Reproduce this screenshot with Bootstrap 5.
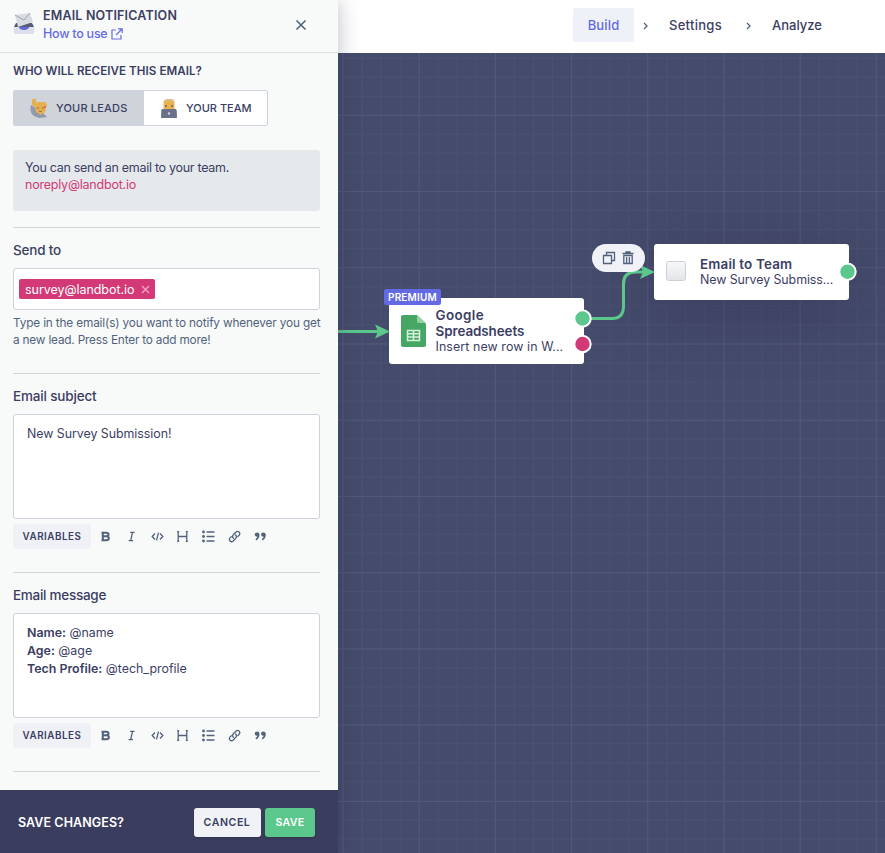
<!DOCTYPE html>
<html lang="en">
<head>
<meta charset="utf-8">
<meta name="viewport" content="width=device-width, initial-scale=1">
<title>Email notification</title>
<link href="https://cdn.jsdelivr.net/npm/bootstrap@5.3.0/dist/css/bootstrap.min.css" rel="stylesheet">
<style>
:root{--ink:#3b3e63;--slate:#51627c;--green:#5cc78c;--pink:#d33976;--violet:#646ae4}
body{font-family:"Inter","Liberation Sans",sans-serif;color:var(--ink);width:885px;height:853px;overflow:hidden;font-size:12.5px;line-height:17px;background:#454b6b}
svg{display:block;flex:none}
.side{width:338px;height:853px;background:#f8faf9;box-shadow:0 0 20px rgba(40,42,70,.3);z-index:5}
.side-head{height:53px;border-bottom:1px solid #dcdfe5;padding:6px 13px 0}
.side-body{height:737px;padding:0 18px 0 13px}
.side-foot{height:63px;background:#3b3d5e;padding:2px 23px 0 18px}
.title{font-size:12.5px;font-weight:600;line-height:18px;padding-top:1px}
.howto{color:var(--violet);font-size:12.5px;font-weight:500;line-height:18px}
.who{font-size:11.6px;font-weight:600;padding-top:10px;height:37px}
.toggle{width:255px;height:36px;border:1px solid #d0d3dc;border-radius:2px;background:#fff;font-size:11px;font-weight:500}
.toggle .half{padding-left:16px;gap:8px}
.toggle .on{width:130px;background:#cfd3da}
.note{margin-top:24px;height:61px;background:#e6e9ec;border-radius:3px;padding:9px 12px}
.pink{color:var(--pink)}
.rule{height:1px;background:#d2d4d9}
.lab{font-size:13.5px;font-weight:500;height:40px;padding-top:14px}
.field{border:1px solid #d0d1da;border-radius:3px;background:#fff}
.chip{height:20px;width:136px;background:var(--pink);border-radius:2px;color:#fff;padding:0 5px 0 6px;font-size:12.5px}
.help{color:var(--slate);font-size:11.8px;height:63px;padding-top:5px;white-space:nowrap}
.area{height:105px;padding:10px 13px;line-height:18px;font-size:12.4px}
.tools{margin-top:5px;height:24px;color:var(--slate)}
.vars{width:78px;height:25px;background:#eff1f6;border-radius:3px;font-size:9.8px;font-weight:600;color:var(--ink);margin-right:8px}
.ico{width:25.8px;color:var(--slate)}
.fbtn{height:29px;border-radius:3px;font-size:10.6px;font-weight:600;padding:0;border:0;line-height:29px;box-shadow:0 1px 2px rgba(0,0,0,.2)}
.b-cancel,.b-cancel:hover{width:67px;background:#f0f2f6;color:var(--ink)}
.b-save,.b-save:hover{width:50px;background:var(--green);color:#fff;margin-left:4.5px}
.main-top{height:53px;background:#fff;padding:8px 0 0 235px;font-size:13px;font-weight:500}
.step-on{width:61px;height:34px;background:#eff1f8;border-radius:2px;color:var(--violet)}
.canvas{height:800px;position:relative;background-color:#454b6b;
background-image:linear-gradient(90deg,#525878 1.3px,transparent 1.3px),linear-gradient(#525878 1.3px,transparent 1.3px),linear-gradient(90deg,#4b5171 1px,transparent 1px),linear-gradient(#4b5171 1px,transparent 1px);
background-size:76.2px 76.2px,76.25px 76.25px,19.05px 19.05px,19.06px 19.06px;background-position:80.7px 0,0 61.8px,80.7px 0,0 61.8px}
.node{position:absolute;background:#fff;border-radius:3px;width:195px}
.node-a{left:51px;top:245px;height:66px;padding:9px 0 0 12px}
.node-b{left:316px;top:191px;height:56px;padding:11px 0 0 12px;box-shadow:0 12px 60px rgba(40,43,80,.4)}
.ntitle{font-size:13.4px;font-weight:600;line-height:16px}
.ntext{font-size:12.4px;line-height:16px;white-space:nowrap}
.prem{position:absolute;left:46px;top:236px;width:57px;height:16px;background:var(--violet);color:#fff;font-size:10px;font-weight:600;border-radius:2px}
.wires{position:absolute;left:0;top:0}
.actions{position:absolute;left:254px;top:191px;width:53px;height:28px;background:#f0f2f7;border-radius:15px;gap:6px;padding-right:2px;color:var(--slate)}
.closer{margin:13px 18px 0 0}
.h42{height:42px}.ms-1px{margin-left:1px}.mt-24{margin-top:24px}
.savetext{font-size:12.5px}
.chev{margin-top:14px}.c-one{margin-left:9px}.s-one{margin-left:21px;width:53px}.c-two{margin-left:24px}.s-two{margin-left:21px}
.step{padding-top:9px}
.mt-boxicon{margin-top:6px}.nb-text{margin:1px 0 0 14px}.na-text{margin:1px 0 0 9.5px}.na-title{line-height:15.5px}
/* tracking */
.t1{letter-spacing:.18px}.t2{letter-spacing:-.25px}.t3{letter-spacing:.06px}.t4{letter-spacing:.19px}
.t6{letter-spacing:-.29px}.t7{letter-spacing:-.22px}.t8{letter-spacing:-.19px}.t9{letter-spacing:-.05px}
.t10{letter-spacing:-.155px}.t11{letter-spacing:-.19px}.t12{letter-spacing:-.17px}.t13{letter-spacing:-.04px}
.t14{letter-spacing:.54px}.t15{letter-spacing:-.27px}.t18{letter-spacing:.08px}.t19{letter-spacing:.55px}
.t20{letter-spacing:.35px}.t21{letter-spacing:.15px}.t22{letter-spacing:.28px}.t24{letter-spacing:.18px}
.t25{letter-spacing:-.07px}.t26{letter-spacing:.4px}.t27{letter-spacing:-.06px}.t28{letter-spacing:.1px}.t29{letter-spacing:.2px}
</style>
</head>
<body>
<svg width="0" height="0" class="position-absolute" aria-hidden="true">
<defs>
<g id="g-code" fill="none" stroke="currentColor" stroke-width="1.3"><path d="M4 3.5 1.2 6.5 4 9.5M9 3.5l2.8 3L9 9.5M7.5 2.7 5.5 10.3"/></g>
<g id="g-list"><g fill="currentColor"><circle cx="1.5" cy="2" r="1.4"/><circle cx="1.5" cy="6.500" r="1.4"/><circle cx="1.5" cy="11" r="1.4"/></g><path d="M4.5 2H12.5M4.5 6.5H12.5M4.5 11H12.5" stroke="currentColor" stroke-width="1.4"/></g>
<g id="g-link" fill="none" stroke="currentColor" stroke-width="1.3" stroke-linecap="round"><path d="M5.5 8.4C4.2 7 4.5 5.7 5.4 4.8L7.9 2.2C8.900 1.2 10.200 1.3 11.100 2.1 12 3 12 4.2 11.100 5.2L9.800 6.600"/><path d="M7.600 5C8.800 6.200 8.600 7.500 7.800 8.400L5.200 11C4.200 11.900 2.900 11.800 2.100 11 1.200 10.100 1.200 8.900 2.100 7.900L3.300 6.700"/></g>
<g id="g-quote" fill="currentColor"><path d="M3.1 2.4C1.7 2.4.8 3.3.8 4.6.8 5.9 1.7 6.7 2.8 6.7 3 6.7 3.2 6.7 3.4 6.6 3.2 7.8 2.4 8.6 1.5 9.1L2.2 10.4C4.2 9.500 5.5 7.500 5.5 5.1 5.5 3.3 4.5 2.4 3.1 2.4Z"/><path d="M9.4 2.4C8 2.4 7.1 3.3 7.1 4.6 7.1 5.9 8 6.7 9.1 6.7 9.3 6.7 9.5 6.7 9.7 6.6 9.5 7.8 8.7 8.6 7.8 9.1L8.5 10.4C10.5 9.5 11.8 7.5 11.8 5.1 11.8 3.3 10.8 2.4 9.4 2.4Z"/></g>
<g id="g-bold" fill="none" stroke="currentColor" stroke-width="2"><path d="M3.8 2.7V10.3M2.5 2.7H7.2C10.3 2.7 10.3 6.3 7.2 6.3H4M7.2 6.3C10.8 6.3 10.8 10.3 7.2 10.3H2.5"/></g>
<g id="g-ital" fill="none" stroke="currentColor" stroke-width="1.3"><path d="M5.2 2.4H9.6M3.600 10.700H8M7.500 2.400 5.700 10.700"/></g>
<g id="g-head" fill="none" stroke="currentColor" stroke-width="1.3"><path d="M2.2 1.5V11.5M10.800 1.500V11.500M2.200 6.500H10.800M1.200 1.700H3.200M9.800 1.700H11.800M1.200 11.300H3.200M9.800 11.300H11.800"/></g>
</defs>
</svg>
<div class="d-flex">
<aside class="side position-relative flex-shrink-0 d-flex flex-column">
  <header class="side-head d-flex">
    <svg width="22" height="24" viewBox="0 0 22 24" class="mt-1"><path d="M2 14 1 19V23Q1 24 2 24H20Q21 24 21 23V19L20 14Z" fill="#d5d9e5"/><path d="M3 13H19L21 17Q11 22 1 17Z" fill="#555d7b"/><path d="M2 5 17 3 20 12 5 17Z" fill="#d8dce1"/><path d="M2 5 11 10 17 3" fill="none" stroke="#9da4ae"/><path d="M1 17H6Q7 20 11 20T16 17H21V24H1Z" fill="#dce0ec"/><path d="M6 17Q7 20 11 20T16 17Z" fill="#6369d8"/></svg>
    <div class="flex-grow-1 ms-2">
      <div class="title"><span class="t1">EMAIL NOTIFICATION</span></div>
      <div class="howto d-flex align-items-center"><span class="t2">How to use</span><svg width="12" height="12" viewBox="0 0 12 12" class="ms-1" fill="none" stroke="currentColor" stroke-width="1.2"><path d="M5 2H1V11H10V7M7 .8H11.2V5M11 1 5 7"/></svg></div>
    </div>
    <svg width="12" height="12" viewBox="0 0 12 12" class="closer" fill="none" stroke="#51627c" stroke-width="1.6"><path d="M1.5 1.5 10.5 10.5M10.5 1.5 1.5 10.5"/></svg>
  </header>
  <div class="side-body">
    <div class="who"><span class="t3">WHO WILL RECEIVE THIS EMAIL?</span></div>
    <div class="toggle d-flex">
      <div class="half on d-flex align-items-center">
        <svg width="18" height="20" viewBox="0 0 18 20"><path d="M1 7Q-1 14 4 18L9 20 17 19 12 14Z" fill="#9298ad"/><path d="M2 2Q3 0 6 1L6 5 8 4 15 4 17 6 15 14 11 17 6 14 5 9 2 7Z" fill="#e5b04d"/><path d="M7 10H9M12 10H14M9 13Q11 14 12 13" stroke="#8e6b4d" fill="none"/><path d="M14 8H16V10H14Z" fill="#e36c72"/></svg>
        <span class="t4">YOUR LEADS</span></div>
      <div class="half d-flex align-items-center">
        <svg width="18" height="20" viewBox="0 0 18 20"><path d="M1 12H17V18H1Z" fill="#9b9fb2"/><rect x="3.5" y="1" width="11" height="12" rx="4" fill="#e7b252"/><path d="M5 3Q9 0 13 3" fill="none" stroke="#c8c8c2"/><path d="M6 7V9M12 7V9" stroke="#744d63" stroke-width="1.3"/><path d="M2 11H16L17 20H1Z" fill="#6c718a"/><circle cx="9" cy="15.5" r="1.2" fill="#d0d3dd"/></svg>
        <span class="t5">YOUR TEAM</span></div>
    </div>
    <div class="note"><div><span class="t6">You can send an email to your team.</span></div><div class="pink"><span class="t7">noreply@landbot.io</span></div></div>
    <div class="rule mt-3"></div>
    <div class="lab"><span class="t8">Send to</span></div>
    <div class="field d-flex align-items-center ps-1 h42"><div class="chip d-flex align-items-center justify-content-between ms-1px"><span class="t9">survey@landbot.io</span><svg width="9" height="9" viewBox="0 0 9 9" stroke="#f0a5c4" stroke-width="1.4"><path d="M1 1 8 8M8 1 1 8"/></svg></div></div>
    <div class="help"><span class="t10">Type in the email(s) you want to notify whenever you get</span><br><span class="t11">a new lead. Press Enter to add more!</span></div>
    <div class="rule"></div>
    <div class="lab"><span class="t12">Email subject</span></div>
    <div class="field area"><span class="t13">New Survey Submission!</span></div>
    <div class="tools d-flex align-items-center"><div class="vars d-flex align-items-center justify-content-center"><span class="t14">VARIABLES</span></div>
      <div class="ico"><svg width="13" height="13"><use href="#g-bold"/></svg></div><div class="ico"><svg width="13" height="13"><use href="#g-ital"/></svg></div><div class="ico"><svg width="13" height="13"><use href="#g-code"/></svg></div><div class="ico"><svg width="13" height="13"><use href="#g-head"/></svg></div><div class="ico"><svg width="13" height="13"><use href="#g-list"/></svg></div><div class="ico"><svg width="13" height="13"><use href="#g-link"/></svg></div><div class="ico"><svg width="13" height="13"><use href="#g-quote"/></svg></div>
    </div>
    <div class="rule mt-24"></div>
    <div class="lab"><span class="t15">Email message</span></div>
    <div class="field area"><div><b class="fw-semibold t16">Name:</b> <span class="t17">@name</span></div><div><b class="fw-semibold t16">Age:</b> <span class="t17">@age</span></div><div><b class="fw-semibold t16">Tech Profile:</b> <span class="t17">@tech_profile</span></div></div>
    <div class="tools d-flex align-items-center"><div class="vars d-flex align-items-center justify-content-center"><span class="t14">VARIABLES</span></div>
      <div class="ico"><svg width="13" height="13"><use href="#g-bold"/></svg></div><div class="ico"><svg width="13" height="13"><use href="#g-ital"/></svg></div><div class="ico"><svg width="13" height="13"><use href="#g-code"/></svg></div><div class="ico"><svg width="13" height="13"><use href="#g-head"/></svg></div><div class="ico"><svg width="13" height="13"><use href="#g-list"/></svg></div><div class="ico"><svg width="13" height="13"><use href="#g-link"/></svg></div><div class="ico"><svg width="13" height="13"><use href="#g-quote"/></svg></div>
    </div>
    <div class="rule mt-24"></div>
  </div>
  <footer class="side-foot d-flex align-items-center"><span class="savetext text-white fw-semibold me-auto"><span class="t18">SAVE CHANGES?</span></span><button class="btn fbtn b-cancel"><span class="t19">CANCEL</span></button><button class="btn fbtn b-save"><span class="t20">SAVE</span></button></footer>
</aside>
<main class="flex-grow-1">
  <nav class="main-top d-flex">
    <div class="step-on d-flex align-items-center justify-content-center"><span class="t21">Build</span></div>
    <svg class="chev c-one" width="5" height="8" viewBox="0 0 5 8" fill="none" stroke="#51627c" stroke-width="1.3"><path d="M1 1 4 4 1 7"/></svg>
    <div class="step s-one"><span class="t22">Settings</span></div>
    <svg class="chev c-two" width="5" height="8" viewBox="0 0 5 8" fill="none" stroke="#51627c" stroke-width="1.3"><path d="M1 1 4 4 1 7"/></svg>
    <div class="step s-two"><span class="t23">Analyze</span></div>
  </nav>
  <section class="canvas">
    <div class="node node-b d-flex"><svg width="20" height="20" viewBox="0 0 20 20" class="mt-boxicon"><defs><linearGradient id="tile" x2="0" y2="1"><stop stop-color="#f7f8f9"/><stop offset="1" stop-color="#e2e5e8"/></linearGradient></defs><rect x=".5" y=".5" width="19" height="19" rx="2" fill="url(#tile)" stroke="#ccd0d6"/></svg><div class="nb-text"><div class="ntitle"><span class="t24">Email to Team</span></div><div class="ntext"><span class="t25">New Survey Submiss...</span></div></div></div>
    <div class="node node-a d-flex"><svg width="25" height="32" viewBox="0 0 25 32" class="mt-2"><path d="M2 0H16L25 9V30Q25 32 23 32H2Q0 32 0 30V2Q0 0 2 0Z" fill="#46a663"/><path d="M16 0 25 8H18Q16 8 16 6Z" fill="#93d0a5"/><path d="M6.5 15.5H18.5V25.5H6.5ZM6.5 18.8H18.5M6.5 22.1H18.5M12.5 15.5V25.5" fill="none" stroke="#d4f1dc" stroke-width="1.5"/></svg><div class="na-text"><div class="ntitle na-title"><span class="t26">Google</span><br><span class="t27">Spreadsheets</span></div><div class="ntext"><span class="t28">Insert new row in W...</span></div></div></div>
    <div class="prem d-flex align-items-center justify-content-center"><span class="t29">PREMIUM</span></div>
    <svg class="wires" width="547" height="330" viewBox="338 53 547 330"><g fill="none" stroke="#5cc78c" stroke-width="3"><path d="M338 331.5H382M590 318.5H612Q623.5 318.5 623.5 306V284Q623.5 272 635 272H647"/></g><path d="M375 324.5 390 331.5 375 338.5 378 331.5ZM640 265 655 272 640 279 643 272Z" fill="#5cc78c"/><g stroke="#fff" stroke-width="2"><circle cx="582.5" cy="318.5" r="8.2" fill="#5cc78c"/><circle cx="582.5" cy="344" r="8.2" fill="#d33976"/><circle cx="847.5" cy="271.7" r="8.2" fill="#5cc78c"/></g></svg>
    <div class="actions d-flex align-items-center justify-content-center"><svg width="14" height="14" viewBox="0 0 14 14" fill="none" stroke="currentColor" stroke-width="1.3"><path d="M1.5 4.5H9.5V12.5H1.5ZM4.5 4V1.5H12.5V9.5H10"/></svg><svg width="12" height="14" viewBox="0 0 12 14" fill="none" stroke="currentColor" stroke-width="1.3"><path d="M.5 2.5H11.5M4 2V1H8V2M1.8 4.5H10.2V12.5H1.8ZM4.6 6V12M7.4 6V12"/></svg></div>
  </section>
</main>
</div>
<script src="https://cdn.jsdelivr.net/npm/bootstrap@5.3.0/dist/js/bootstrap.bundle.min.js"></script>
</body>
</html>
